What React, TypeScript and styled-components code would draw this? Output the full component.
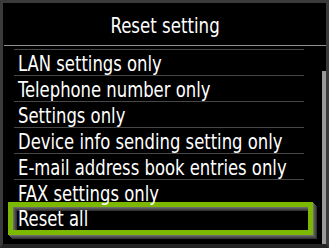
import React from "react";
import styled, { createGlobalStyle } from "styled-components";

const items = [
  "LAN settings only",
  "Telephone number only",
  "Settings only",
  "Device info sending setting only",
  "E-mail address book entries only",
  "FAX settings only",
  "Reset all",
];

const selectedIndex = 6;

const App = () => {
  return (
    <>
      <GlobalStyle />
      <Screen>
        <Header>
          <Title>Reset setting</Title>
        </Header>
        <Body>
          <List>
            {items.map((item, i) => (
              <Row key={item} selected={i === selectedIndex}>
                <Label>{item}</Label>
              </Row>
            ))}
          </List>
          <ScrollTrack>
            <ScrollThumb />
          </ScrollTrack>
        </Body>
      </Screen>
    </>
  );
};

export default App;

const GlobalStyle = createGlobalStyle`
  html, body {
    margin: 0;
    padding: 0;
    background: #000;
  }
`;

const Screen = styled.div`
  box-sizing: border-box;
  width: 329px;
  height: 248px;
  display: flex;
  flex-direction: column;
  background: #000;
  border: 3px solid #3a3a3a;
  border-bottom: 4px solid #242424;
  overflow: hidden;
  color: #fff;
  font-family: "Liberation Sans Narrow", "DejaVu Sans Condensed", "Liberation Sans", sans-serif;
  font-stretch: condensed;
`;

const Header = styled.div`
  height: 42px;
  margin: 0 0 0 1px;
  display: flex;
  align-items: center;
  justify-content: center;
  border-bottom: 1px solid #909090;
  flex-shrink: 0;
`;

const Title = styled.span`
  display: inline-block;
  font-size: 22px;
  line-height: 22px;
  padding-top: 4px;
  transform: scaleX(0.84);
  transform-origin: center;
`;

const Body = styled.div`
  flex: 1;
  display: flex;
  min-height: 0;
`;

const List = styled.ul`
  list-style: none;
  margin: 3px 0 0 11px;
  padding: 0;
  width: 290px;
  display: flex;
  flex-direction: column;
`;

const Row = styled.li<{ selected?: boolean }>`
  box-sizing: border-box;
  height: 26px;
  padding-left: 4px;
  border-top: 1px solid #474747;
  font-size: 22px;
  line-height: 27px;
  white-space: nowrap;
  flex-shrink: 0;

  ${({ selected }) =>
    selected &&
    `
    height: 33px;
    margin: -3px -9px 0 -6px;
    padding-left: 5px;
    border: 5px solid #7cb800;
    line-height: 23px;
    box-shadow:
      1px 1px 0 #6a6a6a, 2px 2px 0 #585858, 3px 3px 0 #464646, 4px 4px 0 #343434,
      inset 1px 1px 0 #6a6a6a, inset 2px 2px 0 #585858, inset 3px 3px 0 #464646, inset 4px 4px 0 #343434;
  `}
`;

const Label = styled.span`
  display: inline-block;
  transform: scaleX(0.83);
  transform-origin: left center;
`;

const ScrollTrack = styled.div`
  margin-left: auto;
  width: 4px;
  padding-top: 25px;
  display: flex;
`;

const ScrollThumb = styled.div`
  width: 3px;
  flex: 1;
  background: #9a9a9a;
`;
